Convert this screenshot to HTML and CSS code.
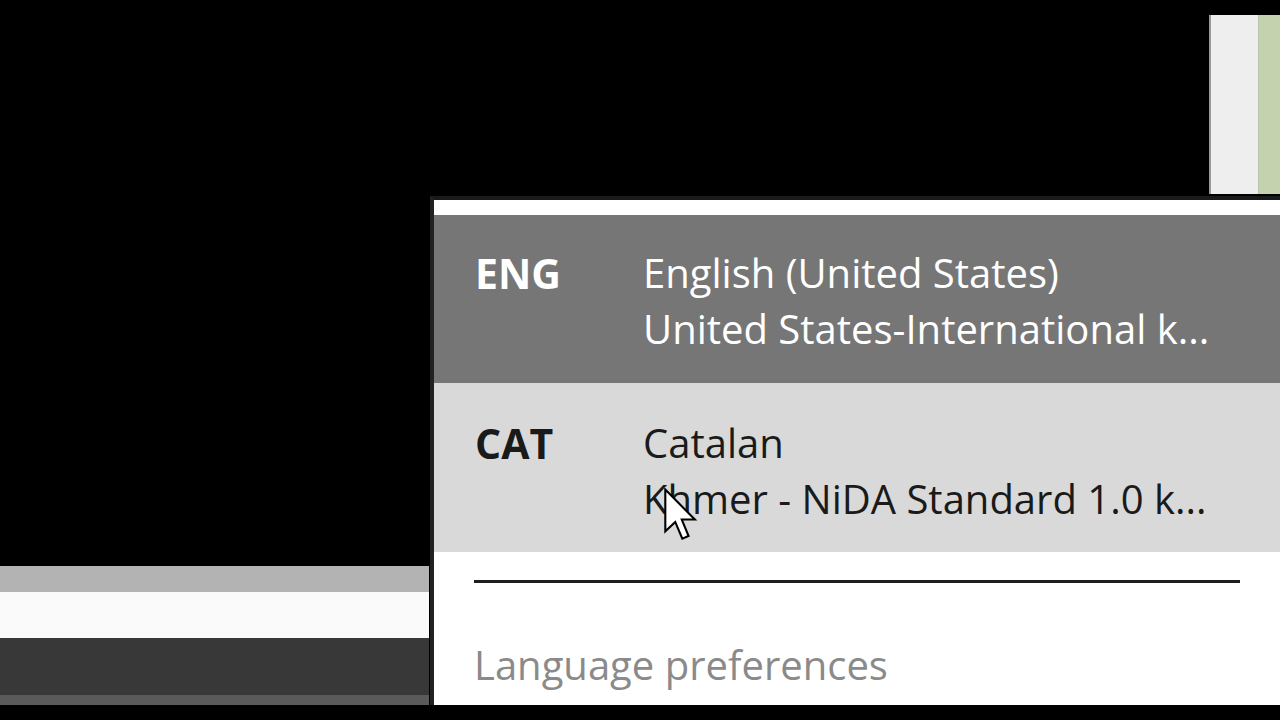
FILE: index.html
```html
<!DOCTYPE html>
<html lang="en">
<head>
<meta charset="utf-8">
<title>Language flyout</title>
<link rel="stylesheet" href="styles.css">
</head>
<body>
<div class="desktop">
  <div class="win-right">
    <div class="win-right-pane"></div>
    <div class="win-right-green"></div>
  </div>
  <div class="win-left">
    <div class="band band-gray"></div>
    <div class="band band-white"></div>
    <div class="band band-dark"></div>
    <div class="band band-edge"></div>
  </div>

  <div class="flyout">
    <div class="flyout-top"></div>
    <div class="lang lang-active">
      <div class="code">ENG</div>
      <div class="names">
        <div class="name">English (United States)</div>
        <div class="name">United States-International k...</div>
      </div>
    </div>
    <div class="lang lang-hover">
      <div class="code">CAT</div>
      <div class="names">
        <div class="name">Catalan</div>
        <div class="name">Khmer - NiDA Standard 1.0 k...</div>
      </div>
    </div>
    <div class="footer">
      <div class="rule"></div>
      <div class="prefs">Language preferences</div>
    </div>
  </div>

  <svg class="cursor" width="34" height="54" viewBox="0 0 13 20.5">
    <path d="M0.5 0.5 L0.5 16.5 L4.3 12.9 L7 19.3 L9.4 18.3 L6.8 12 L11.8 12 Z" fill="#ffffff" stroke="#000000" stroke-width="0.8" stroke-linejoin="miter"/>
  </svg>
</div>
</body>
</html>
```

FILE: styles.css
```css
html, body {
  margin: 0;
  padding: 0;
  background: #000;
  overflow: hidden;
}

.desktop {
  position: relative;
  width: 1280px;
  height: 720px;
  background: #000;
  font-family: "Open Sans", "Noto Sans", "DejaVu Sans", sans-serif;
}

.win-right {
  position: absolute;
  left: 1209px;
  top: 15px;
  width: 71px;
  height: 179px;
  display: flex;
  border-left: 2px solid #9a9a9a;
  box-sizing: border-box;
}
.win-right-pane {
  width: 47px;
  background: #eeeeee;
  border-right: 1px solid #b9c3ad;
}
.win-right-green {
  flex: 1;
  background: #c4d2ae;
}

.win-left {
  position: absolute;
  left: 0;
  top: 566px;
  width: 429px;
  display: flex;
  flex-direction: column;
}
.band-gray { height: 26px; background: #b3b3b3; }
.band-white { height: 46px; background: #fafafa; }
.band-dark { height: 57px; background: #383838; }
.band-edge { height: 10px; background: #5a5a5a; }

.flyout {
  position: absolute;
  left: 430px;
  top: 196px;
  width: 860px;
  height: 509px;
  background: #ffffff;
  border-left: 4px solid #222222;
  border-top: 4px solid #1a1a1a;
  box-sizing: border-box;
  display: flex;
  flex-direction: column;
}

.flyout-top {
  height: 15px;
}

.lang {
  display: flex;
  align-items: flex-start;
  box-sizing: border-box;
}
.lang-active {
  height: 168px;
  padding-top: 30px;
  background: #767676;
  color: #ffffff;
}
.lang-hover {
  height: 169px;
  padding-top: 32px;
  background: #d9d9d9;
  color: #1a1a1a;
}

.code {
  width: 209px;
  padding-left: 41px;
  box-sizing: border-box;
  font-weight: 700;
  font-size: 41px;
  line-height: 56px;
}
.names {
  display: flex;
  flex-direction: column;
  font-size: 40px;
  line-height: 56px;
  white-space: nowrap;
}

.footer {
  display: flex;
  flex-direction: column;
  padding-left: 40px;
  padding-top: 28px;
}
.rule {
  width: 766px;
  height: 3px;
  background: #1e1e1e;
}
.prefs {
  margin-top: 54px;
  font-size: 40px;
  line-height: 56px;
  color: #8a8a8a;
}

.cursor {
  position: absolute;
  left: 664px;
  top: 488px;
}
```
